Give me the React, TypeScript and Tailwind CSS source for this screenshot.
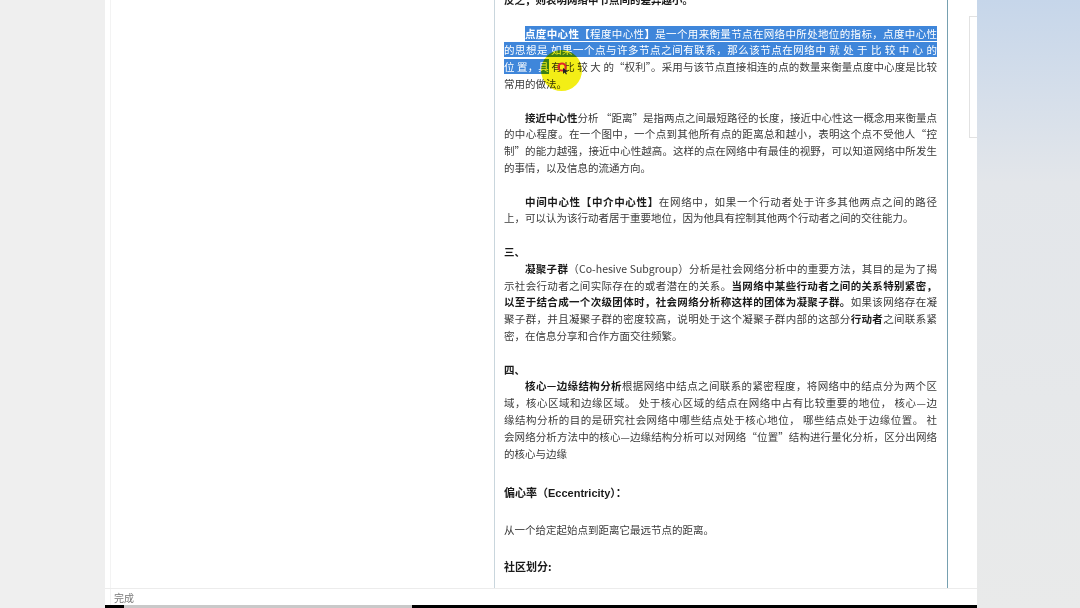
import type { ReactNode } from "react";
import clsx from "clsx";

// 一行ずつ両端揃えで描く
const Line = ({
  children,
  last = false,
  indent = false,
}: {
  children?: ReactNode;
  last?: boolean;
  indent?: boolean;
}) => (
  <div
    className={clsx(
      "h-[16.8px] leading-[16.8px]",
      last ? "text-left" : "text-justify [text-align-last:justify]",
      indent && "pl-[21px]"
    )}
  >
    {children}
  </div>
);

const Blank = () => <div className="h-[16.8px]" />;

const B = ({ children }: { children: ReactNode }) => (
  <b className="font-bold text-[#1a1a1a]">{children}</b>
);

const Sel = ({ children }: { children: ReactNode }) => (
  <span className="bg-[#3f86da] text-white">{children}</span>
);

const Document = () => (
  <div className="relative w-[454px] h-full border-l border-r border-l-[#c9d6dd] border-r-[#76a0b0] bg-white overflow-hidden">
    <div className="pl-[9px] pr-[10px] mt-[-8px] text-[10.5px] text-[#3a3a3a] font-['Noto_Sans_CJK_SC','Noto_Sans',sans-serif]">
      <Line last>
        <B>反之，则表明网络中节点间的差异越小。</B>
      </Line>
      <Blank />

      {/* 点度中心性 */}
      <Line indent>
        <Sel>
          <b className="font-bold">点度中心性【</b>程度中心性<b className="font-bold">】</b>
          是一个用来衡量节点在网络中所处地位的指标，点度中心性
        </Sel>
      </Line>
      <Line>
        <Sel>的思想是 如果一个点与许多节点之间有联系，那么该节点在网络中 就 处 于 比 较 中 心 的</Sel>
      </Line>
      <Line>
        <Sel>位 置，具</Sel> 有 比 较 大 的“权利”。采用与该节点直接相连的点的数量来衡量点度中心度是比较
      </Line>
      <Line last>常用的做法。</Line>
      <Blank />

      {/* 接近中心性 */}
      <Line indent>
        <B>接近中心性</B>分析 “距离”是指两点之间最短路径的长度，接近中心性这一概念用来衡量点
      </Line>
      <Line>的中心程度。在一个图中，一个点到其他所有点的距离总和越小，表明这个点不受他人“控</Line>
      <Line>制”的能力越强，接近中心性越高。这样的点在网络中有最佳的视野，可以知道网络中所发生</Line>
      <Line last>的事情，以及信息的流通方向。</Line>
      <Blank />

      {/* 中间中心性 */}
      <Line indent>
        <B>中间中心性【中介中心性】</B>在网络中，如果一个行动者处于许多其他两点之间的路径
      </Line>
      <Line last>上，可以认为该行动者居于重要地位，因为他具有控制其他两个行动者之间的交往能力。</Line>
      <Blank />

      <Line last>
        <B>三、</B>
      </Line>
      <Line indent>
        <B>凝聚子群</B>（Co-hesive Subgroup）分析是社会网络分析中的重要方法，其目的是为了揭
      </Line>
      <Line>
        示社会行动者之间实际存在的或者潜在的关系。<B>当网络中某些行动者之间的关系特别紧密，</B>
      </Line>
      <Line>
        <B>以至于结合成一个次级团体时，社会网络分析称这样的团体为凝聚子群。</B>如果该网络存在凝
      </Line>
      <Line>
        聚子群，并且凝聚子群的密度较高，说明处于这个凝聚子群内部的这部分<B>行动者</B>之间联系紧
      </Line>
      <Line last>密，在信息分享和合作方面交往频繁。</Line>
      <Blank />

      <Line last>
        <B>四、</B>
      </Line>
      <Line indent>
        <B>核心—边缘结构分析</B>根据网络中结点之间联系的紧密程度，将网络中的结点分为两个区
      </Line>
      <Line>域，核心区域和边缘区域。 处于核心区域的结点在网络中占有比较重要的地位， 核心—边</Line>
      <Line>缘结构分析的目的是研究社会网络中哪些结点处于核心地位， 哪些结点处于边缘位置。 社</Line>
      <Line>会网络分析方法中的核心—边缘结构分析可以对网络“位置”结构进行量化分析，区分出网络</Line>
      <Line last>的核心与边缘</Line>

      <div className="mt-[23px] text-[11px] font-['Liberation_Sans','Noto_Sans_CJK_SC',sans-serif]">
        <Line last>
          <B>偏心率（Eccentricity）：</B>
        </Line>
      </div>
      <div className="mt-[20px]">
        <Line last>从一个给定起始点到距离它最远节点的距离。</Line>
      </div>
      <div className="mt-[19px] text-[11px]">
        <Line last>
          <B>社区划分:</B>
        </Line>
      </div>
    </div>

    {/* カーソルのハイライト */}
    <div className="absolute left-[46px] top-[50px] w-[41px] h-[41px] rounded-full bg-[#f3ee16] mix-blend-multiply" />
    <svg
      className="absolute left-[61px] top-[61px]"
      width="14"
      height="14"
      viewBox="0 0 14 14"
    >
      <circle cx="6" cy="6" r="3.6" fill="none" stroke="#e0262b" strokeWidth="2" />
      <path d="M7 7 L7 13 L8.6 11.4 L10 13.6 L11 13 L9.8 10.8 L12 10.6 Z" fill="#222" />
    </svg>
  </div>
);

export default function App() {
  return (
    <div className="flex w-[1080px] h-[608px] overflow-hidden bg-[#efefef] font-['Noto_Sans_CJK_SC',sans-serif]">
      <div className="w-[105px] bg-[#efefef]" />

      <div className="w-[872px] flex flex-col bg-white">
        <div className="flex-1 flex min-h-0">
          <div className="w-[5px]" />
          <div className="w-[384px] border-l border-[#f3f3f3]" />
          <Document />
          <div className="w-[29px] pl-[21px] pt-[16px]">
            <div className="w-[8px] h-[122px] border-l border-t border-b border-[#e2e2e2]" />
          </div>
        </div>

        <div className="h-[17px] flex border-t border-[#ececec]">
          <div className="w-[5px]" />
          <div className="flex-1 border-l border-[#f3f3f3] pl-[3px] flex items-center text-[10px] text-[#777]">
            完成
          </div>
        </div>

        <div className="h-[3px] flex">
          <div className="w-[19px] bg-black" />
          <div className="w-[288px] bg-[#c9c9c9]" />
          <div className="flex-1 bg-black" />
        </div>
      </div>

      <div className="flex-1 bg-linear-to-b from-[#c6d6ea] via-[#e3e6ea] via-30% to-[#e9eaea]" />
    </div>
  );
}
